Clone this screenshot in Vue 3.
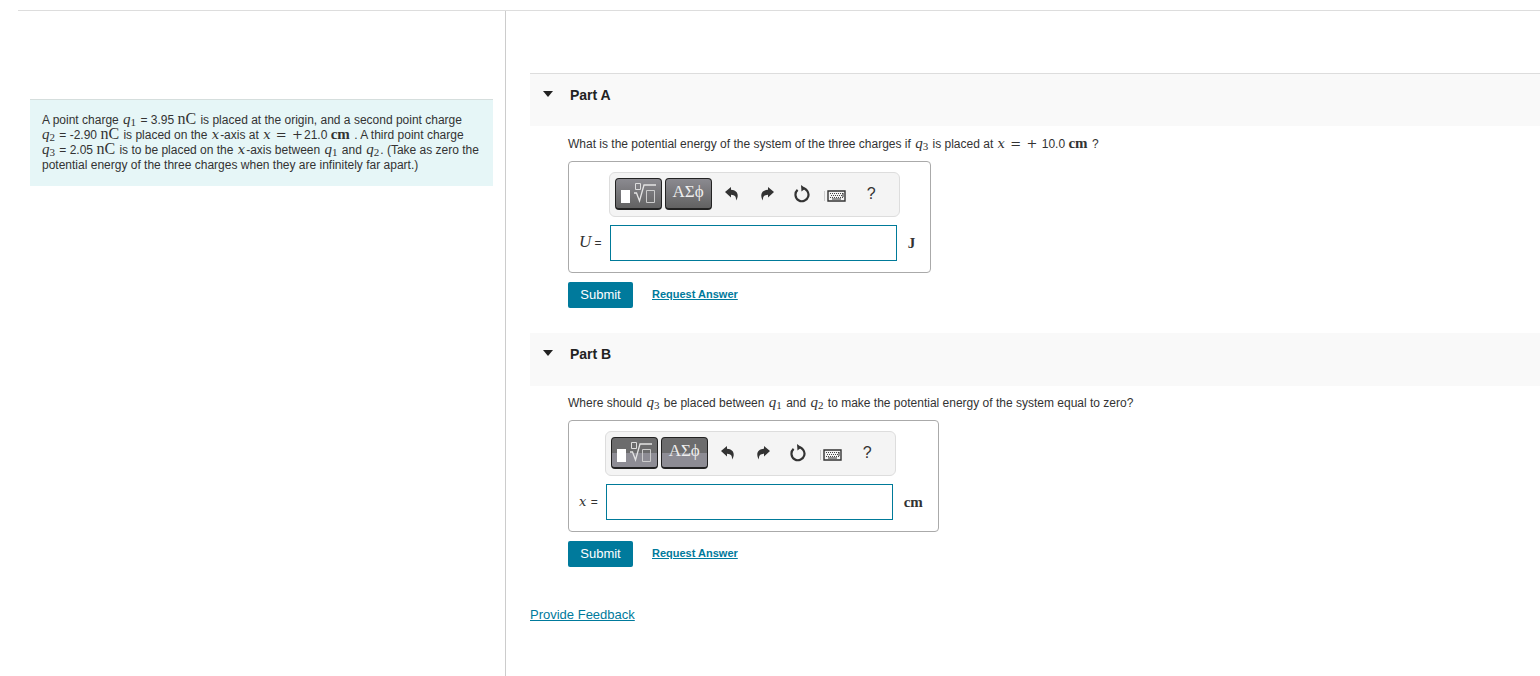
<script setup>
import { reactive } from 'vue'

const parts = reactive([
  { id: 'a', title: 'Part A', symbol: 'U', unit: 'J', answer: '' },
  { id: 'b', title: 'Part B', symbol: 'x', unit: 'cm', answer: '' },
])
</script>

<template>
  <div class="page">
    <aside class="side">
      <p class="intro">
        A point charge <i class="m">q<sub>1</sub></i> = 3.95 <span class="u">nC</span> is placed at the origin, and a second point charge<br>
        <i class="m">q<sub>2</sub></i> = -2.90 <span class="u">nC</span> is placed on the <i class="m x">x</i>-axis at <i class="m x">x</i> <span class="op">=</span> <span class="op">+</span>21.0 <span class="u cm">cm</span> . A third point charge<br>
        <i class="m">q<sub>3</sub></i> = 2.05 <span class="u">nC</span> is to be placed on the <i class="m x">x</i>-axis between <i class="m">q<sub>1</sub></i> and <i class="m">q<sub>2</sub></i>. (Take as zero the<br>
        potential energy of the three charges when they are infinitely far apart.)
      </p>
    </aside>
    <main class="main">
      <section v-for="part in parts" :key="part.id" class="part" :class="'part-' + part.id">
        <h2 class="head">
          <button class="toggle" type="button">
            <svg width="10" height="6" viewBox="0 0 10 6"><path d="M0 0h10L5 6z" fill="#222" /></svg>
            {{ part.title }}
          </button>
        </h2>
        <div class="body">
          <p v-if="part.id === 'a'" class="question">
            What is the potential energy of the system of the three charges if <i class="m">q<sub>3</sub></i> is placed at <i class="m x">x</i> <span class="op">=</span> <span class="op">+</span> 10.0 <span class="u cm">cm</span> ?
          </p>
          <p v-else class="question">
            Where should <i class="m">q<sub>3</sub></i> be placed between <i class="m">q<sub>1</sub></i> and <i class="m">q<sub>2</sub></i> to make the potential energy of the system equal to zero?
          </p>
          <div class="box">
            <label class="label" :for="'answer-' + part.id"><i class="sym" :class="{ x: part.symbol === 'x' }">{{ part.symbol }}</i> =</label>
            <div class="entry">
              <div class="toolbar">
                <button class="key" type="button" aria-label="Templates">
                  <svg width="36" height="22" viewBox="0 0 36 22" fill="none">
                    <path d="M1 8h9v13H1z" fill="#fff" />
                    <path d="M15.500 1.500h5v6h-5z" stroke="#ddd" />
                    <path d="M14 11h2.500l3 8 4.500-16h12" stroke="#e4e4e4" stroke-width="1.300" />
                    <path d="M26.500 8.500h8v12h-8z" stroke="#ccc" />
                  </svg>
                </button>
                <button class="key greek" type="button">ΑΣϕ</button>
                <button class="tool" type="button" aria-label="Undo">
                  <svg width="14" height="14" viewBox="0 0 14 14"><path d="M0 5L6 0v2.700C10.500 3 13 5.500 12.700 9c-.1 1.700-.8 3.300-1.700 4.500.3-3.500-.8-5.500-5-5.700v2.700z" fill="#333" /></svg>
                </button>
                <button class="tool" type="button" aria-label="Redo">
                  <svg width="14" height="14" viewBox="0 0 14 14"><path d="M14 5L8 0v2.700C3.500 3 1 5.500 1.300 9c.1 1.700.8 3.300 1.700 4.500C2.700 10 3.800 8 8 7.800v2.700z" fill="#333" /></svg>
                </button>
                <button class="tool" type="button" aria-label="Reset">
                  <svg width="16" height="18" viewBox="0 0 16 18"><path d="M8 3.200A6.500 6.500 0 1 1 3.600 4.900" stroke="#333" stroke-width="2.200" fill="none" /><path d="M7 0l4.500 3.200L7.500 6.500z" fill="#333" /></svg>
                </button>
                <button class="tool" type="button" aria-label="Keyboard shortcuts">
                  <svg class="keyboard" width="24" height="14" viewBox="0 0 24 14" fill="none">
                    <path d="M.5 2v10" stroke="#ccc" />
                    <path d="M4 2h17v10H4z" stroke="#333" stroke-width="1.400" />
                    <path d="M6 4.500h14M7 6.500h12M6 8.500h14" stroke="#444" stroke-dasharray="1 1" />
                    <path d="M8 10h9M19 4v4" stroke="#333" />
                  </svg>
                </button>
                <button class="tool help" type="button">?</button>
              </div>
              <input :id="'answer-' + part.id" v-model="part.answer" class="field" type="text">
            </div>
            <span class="unit">{{ part.unit }}</span>
          </div>
          <div class="actions">
            <button class="submit" type="button">Submit</button>
            <a class="request" href="#">Request Answer</a>
          </div>
        </div>
      </section>
      <a class="feedback" href="#">Provide Feedback</a>
    </main>
  </div>
</template>

<style>
body { margin: 0; background: #fff; }
</style>

<style scoped>
* { box-sizing: border-box; }
.page {
  display: flex;
  margin: 10px 0 0 18px;
  min-height: calc(100vh - 10px);
  border-top: 1px solid #ddd;
  font: 12px/15px "Liberation Sans", Arial, sans-serif;
  color: #333;
}
p, h2 { margin: 0; }
button { font-family: inherit; padding: 0; border: 0; background: none; cursor: pointer; }
.side { flex: 0 0 488px; padding: 88px 12px 0; border-right: 1px solid #ccc; }
.intro {
  padding: 13px 12px;
  border-top: 1px solid #d5dedd;
  background: #e6f6f7;
  white-space: nowrap;
}
.main { flex: 1; min-width: 0; padding: 62px 0 0 24px; }
.m, .u, .op, .sym, .unit { font-family: "Liberation Serif", "Times New Roman", serif; line-height: 1px; }
.m { margin: 0 1px; font-size: 15px; }
.intro br + .m { margin-left: 0; }
.m sub { font-size: 11px; font-style: normal; line-height: 1px; vertical-align: -2px; }
.u { margin-right: 1px; font-size: 16px; }
.op { margin: 0 1px; font-family: "DejaVu Serif", serif; font-size: 13px; }
.m.x, .sym.x { font-family: "DejaVu Serif", serif; font-size: 13px; }
.sym.x { margin-right: 1px; }
.u.cm, .unit { font-size: 15px; font-weight: bold; }
.head { height: 53px; padding: 13px 0 0 13px; background: #f9f9f9; line-height: 16px; }
.part-a .head { border-top: 1px solid #ddd; }
.toggle { display: flex; align-items: center; gap: 17px; font-size: 14px; font-weight: bold; line-height: 16px; color: #222; }
.toggle svg { margin-bottom: 2px; }
.body { padding: 11px 0 25px 38px; }
.part-b .body { padding-top: 10px; }
.question { height: 15px; line-height: 15px; white-space: nowrap; }
.box {
  display: inline-flex;
  align-items: flex-end;
  margin-top: 9px;
  padding: 10px 15px 11px 10px;
  border: 1px solid #aaa;
  border-radius: 4px;
  vertical-align: top;
}
.label { padding-right: 8px; line-height: 36px; white-space: nowrap; }
.sym { font-size: 17px; }
.entry { display: flex; flex-direction: column; gap: 8px; }
.toolbar {
  display: flex;
  align-items: center;
  height: 45px;
  width: 291px;
  margin: 0 -3px 0 -1px;
  padding: 0 10px 2px 5px;
  border: 1px solid #ddd;
  border-radius: 6px;
  background: #f4f4f4;
}
.key {
  display: flex;
  align-items: center;
  justify-content: center;
  width: 47px;
  height: 32px;
  margin-right: 3px;
  border: 1px solid #222;
  border-bottom-width: 2px;
  border-radius: 4px;
  background: linear-gradient(#8b8a90, #626262);
  color: #eee;
}
.part-b .key { background: linear-gradient(#6c6c6d 50%, #8d8c94 50%); }
.greek { font: 17px/20px "Liberation Serif", serif; padding-bottom: 3px; }
.tool { display: flex; align-items: center; justify-content: center; flex: 1; height: 32px; color: #333; }
.help { font-size: 16px; }
.keyboard { margin-top: 4px; }
.field { width: 287px; height: 36px; margin: 0; padding: 0 8px; border: 1px solid #007a99; border-radius: 0; background: #fff; font: 16px "Liberation Serif", serif; }
.unit { padding-left: 11px; line-height: 36px; color: #333; }
.actions { display: flex; align-items: center; gap: 19px; margin-top: 9px; }
.submit { width: 65px; height: 26px; padding-bottom: 1px; border-radius: 2px; background: #007a9c; color: #fff; font-size: 13px; }
.request { padding-bottom: 2px; font-size: 11px; font-weight: bold; color: #007a9c; }
.feedback { display: inline-block; margin-top: 15px; font-size: 13px; line-height: 16px; color: #007a9c; }
</style>
